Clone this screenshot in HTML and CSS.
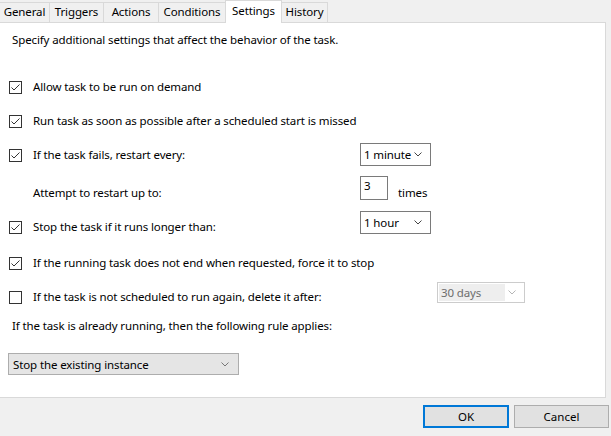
FILE: index.html
```html
<!DOCTYPE html>
<html>
<head>
<meta charset="utf-8">
<link rel="stylesheet" href="styles.css">
</head>
<body>
<div class="window">
  <div class="tabs">
    <div class="tab t-general">General</div>
    <div class="tab t-triggers">Triggers</div>
    <div class="tab t-actions">Actions</div>
    <div class="tab t-conditions">Conditions</div>
    <div class="tab active t-settings">Settings</div>
    <div class="tab t-history">History</div>
  </div>
  <div class="panel">
    <p class="desc">Specify additional settings that affect the behavior of the task.</p>

    <div class="row r-demand">
      <span class="cb"><svg width="13" height="13" viewBox="0 0 13 13"><path d="M2.5 6.5 L5 9 L10.5 3.5" fill="none" stroke="#333" stroke-width="1"/></svg></span>
      <span class="lbl">Allow task to be run on demand</span>
    </div>

    <div class="row r-missed">
      <span class="cb"><svg width="13" height="13" viewBox="0 0 13 13"><path d="M2.5 6.5 L5 9 L10.5 3.5" fill="none" stroke="#333" stroke-width="1"/></svg></span>
      <span class="lbl">Run task as soon as possible after a scheduled start is missed</span>
    </div>

    <div class="row ctl r-restart">
      <div class="lcol">
        <span class="cb"><svg width="13" height="13" viewBox="0 0 13 13"><path d="M2.5 6.5 L5 9 L10.5 3.5" fill="none" stroke="#333" stroke-width="1"/></svg></span>
        <span class="lbl">If the task fails, restart every:</span>
      </div>
      <div class="dd w71"><span>1 minute</span><svg class="chev" width="8" height="5" viewBox="0 0 8 5"><path d="M0.5 0.5 L4 4 L7.5 0.5" fill="none" stroke="#444" stroke-width="1"/></svg></div>
    </div>

    <div class="row ctl r-attempt">
      <div class="lcol indent"><span class="lbl">Attempt to restart up to:</span></div>
      <div class="num">3</div>
      <span class="lbl times">times</span>
    </div>

    <div class="row ctl r-stop">
      <div class="lcol">
        <span class="cb"><svg width="13" height="13" viewBox="0 0 13 13"><path d="M2.5 6.5 L5 9 L10.5 3.5" fill="none" stroke="#333" stroke-width="1"/></svg></span>
        <span class="lbl">Stop the task if it runs longer than:</span>
      </div>
      <div class="dd w71"><span>1 hour</span><svg class="chev" width="8" height="5" viewBox="0 0 8 5"><path d="M0.5 0.5 L4 4 L7.5 0.5" fill="none" stroke="#444" stroke-width="1"/></svg></div>
    </div>

    <div class="row r-force">
      <span class="cb"><svg width="13" height="13" viewBox="0 0 13 13"><path d="M2.5 6.5 L5 9 L10.5 3.5" fill="none" stroke="#333" stroke-width="1"/></svg></span>
      <span class="lbl">If the running task does not end when requested, force it to stop</span>
    </div>

    <div class="row ctl r-delete">
      <div class="lcol wide">
        <span class="cb"></span>
        <span class="lbl">If the task is not scheduled to run again, delete it after:</span>
      </div>
      <div class="dd disabled"><span>30 days</span><svg class="chev" width="8" height="5" viewBox="0 0 8 5"><path d="M0.5 0.5 L4 4 L7.5 0.5" fill="none" stroke="#b5b5b5" stroke-width="1"/></svg></div>
    </div>

    <p class="rule">If the task is already running, then the following rule applies:</p>

    <div class="combo"><span>Stop the existing instance</span><svg class="chev" width="8" height="5" viewBox="0 0 8 5"><path d="M0.5 0.5 L4 4 L7.5 0.5" fill="none" stroke="#777" stroke-width="1"/></svg></div>
  </div>
  <div class="footer">
    <button class="btn primary">OK</button>
    <button class="btn">Cancel</button>
  </div>
</div>
</body>
</html>
```

FILE: styles.css
```css
html, body {
  margin: 0;
  padding: 0;
  background: #f0f0f0;
}
body {
  font-family: "Noto Sans", "Open Sans", sans-serif;
  font-size: 11.5px;
  letter-spacing: -0.12px;
  color: #000;
  width: 611px;
  height: 436px;
  overflow: hidden;
}
.window {
  display: flex;
  flex-direction: column;
  height: 436px;
}
.tabs {
  display: flex;
  align-items: flex-end;
  height: 22px;
  position: relative;
  z-index: 2;
}
.tab {
  box-sizing: border-box;
  height: 20px;
  line-height: 18px;
  border: 1px solid #d9d9d9;
  border-bottom: none;
  border-right: none;
  background: #f0f0f0;
  text-align: center;
  white-space: nowrap;
}
.tab:last-child { border-right: 1px solid #d9d9d9; }
.tab.active {
  height: 23px;
  margin-bottom: -1px;
  background: #fff;
  line-height: 19px;
  border-right: 1px solid #d9d9d9;
}
.tab.active + .tab { border-left: none; }
.t-general { width: 49px; border-left: none; }
.t-triggers { width: 54px; }
.t-actions { width: 55px; }
.t-conditions { width: 67px; }
.t-settings { width: 57px; }
.t-history { width: 46px; }

.panel {
  box-sizing: border-box;
  width: 606px;
  height: 376px;
  background: #fff;
  border: 1px solid #d9d9d9;
  border-left: none;
  padding-top: 9px;
  position: relative;
  z-index: 1;
}
.desc {
  margin: 0 0 0 12px;
  line-height: 16px;
}
.row {
  display: flex;
  align-items: center;
  height: 20px;
  padding-left: 9px;
}
.cb {
  box-sizing: border-box;
  width: 13px;
  height: 13px;
  border: 1px solid #333;
  background: #fff;
  display: flex;
  align-items: center;
  justify-content: center;
  flex: none;
  margin-right: 11px;
}
.cb svg { display: block; margin: -1px; }
.lbl { line-height: 16px; white-space: nowrap; }

.r-demand { margin-top: 29px; }
.r-missed { margin-top: 14px; }

.row.ctl { height: auto; align-items: flex-start; }
.lcol {
  width: 351px;
  display: flex;
  align-items: center;
  flex: none;
}
.lcol.wide { width: 428px; }
.lcol.indent { padding-left: 24px; box-sizing: border-box; }

.r-restart { margin-top: 12px; }
.r-restart .lcol { margin-top: 4px; }
.r-attempt { margin-top: 10px; }
.r-attempt .lcol { margin-top: 9px; }
.r-stop { margin-top: 10px; }
.r-stop .lcol { margin-top: 8px; }
.r-force { margin-top: 18px; }
.r-delete { margin-top: 9px; }
.r-delete .lcol { margin-top: 7px; }

.dd {
  box-sizing: border-box;
  height: 23px;
  border: 1px solid #7a7a7a;
  background: #fff;
  display: flex;
  align-items: center;
  justify-content: space-between;
  padding: 0 8px 0 3px;
  line-height: 16px;
  white-space: nowrap;
}
.w71 { width: 71px; }
.dd.disabled {
  width: 88px;
  height: 21px;
  border-color: #cccccc;
  color: #6d6d6d;
  padding: 1px 8px 1px 1px;
}
.dd.disabled span {
  background: #eeeeee;
  width: 64px;
  height: 17px;
  line-height: 17px;
  padding-left: 2px;
}
.num {
  box-sizing: border-box;
  width: 28px;
  height: 24px;
  border: 1px solid #7a7a7a;
  padding: 1px 0 0 3px;
  line-height: 16px;
}
.times { margin: 9px 0 0 10px; }

.rule {
  margin: 13px 0 0 12px;
  line-height: 16px;
}
.combo {
  box-sizing: border-box;
  margin: 19px 0 0 8px;
  width: 231px;
  height: 22px;
  background: #e5e5e5;
  border: 1px solid #adadad;
  display: flex;
  align-items: center;
  justify-content: space-between;
  padding: 0 9px 0 4px;
}
.chev { display: block; flex: none; }

.footer {
  display: flex;
  padding: 7px 0 0 423px;
  gap: 5px;
}
.btn {
  box-sizing: border-box;
  font: inherit;
  color: #000;
  height: 23px;
  background: #e1e1e1;
  border: 1px solid #adadad;
  padding: 0;
  width: 95px;
}
.btn.primary {
  border: 2px solid #0078d7;
  width: 86px;
}
```
